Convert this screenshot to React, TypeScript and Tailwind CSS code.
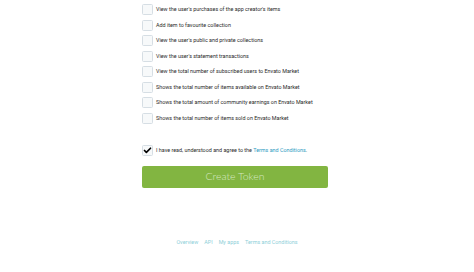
import { Check } from "lucide-react";

const SCOPES = [
  "View the user's purchases of the app creator's items",
  "Add item to favourite collection",
  "View the user's public and private collections",
  "View the user's statement transactions",
  "View the total number of subscribed users to Envato Market",
  "Shows the total number of items available on Envato Market",
  "Shows the total amount of community earnings on Envato Market",
  "Shows the total number of items sold on Envato Market",
];

export default function App() {
  return (
    <div className="w-[474px] h-[272px] bg-white font-['Roboto',sans-serif] overflow-hidden">
      <div className="w-[190px] mx-auto pt-[4px]">
        <ul className="flex flex-col gap-[4.5px]">
          {SCOPES.map((s) => (
            <li key={s} className="flex items-center gap-[3px] h-[11px]">
              <span className="w-[11px] h-[11px] shrink-0 rounded-[1.5px] border border-[#d6dee4] bg-[#f7f9fa]" />
              <span className="text-[5.4px] text-[#2a2a2a] whitespace-nowrap">{s}</span>
            </li>
          ))}
        </ul>

        <div className="flex items-center gap-[3px] mt-[21px] h-[11px]">
          <span className="w-[11px] h-[11px] shrink-0 rounded-[1.5px] border border-[#d6dee4] bg-[#f7f9fa] flex items-center justify-center">
            <Check className="w-[9px] h-[9px] text-black" strokeWidth={4.5} />
          </span>
          <span className="text-[5.4px] text-[#2a2a2a] whitespace-nowrap">
            I have read, understood and agree to the{" "}
            <span className="text-[#2d9bc2]">Terms and Conditions</span>.
          </span>
        </div>

        <button className="mt-[10px] w-[186px] h-[22px] rounded-[2px] bg-[#82b541] text-[#d6e8c2] text-[10.5px] font-['Lato',sans-serif] font-light">
          Create Token
        </button>
      </div>

      <div className="flex justify-center gap-[6px] mt-[50px] text-[5.4px] text-[#8ecfd9]">
        <span>Overview</span>
        <span>API</span>
        <span>My apps</span>
        <span>Terms and Conditions</span>
      </div>
    </div>
  );
}
